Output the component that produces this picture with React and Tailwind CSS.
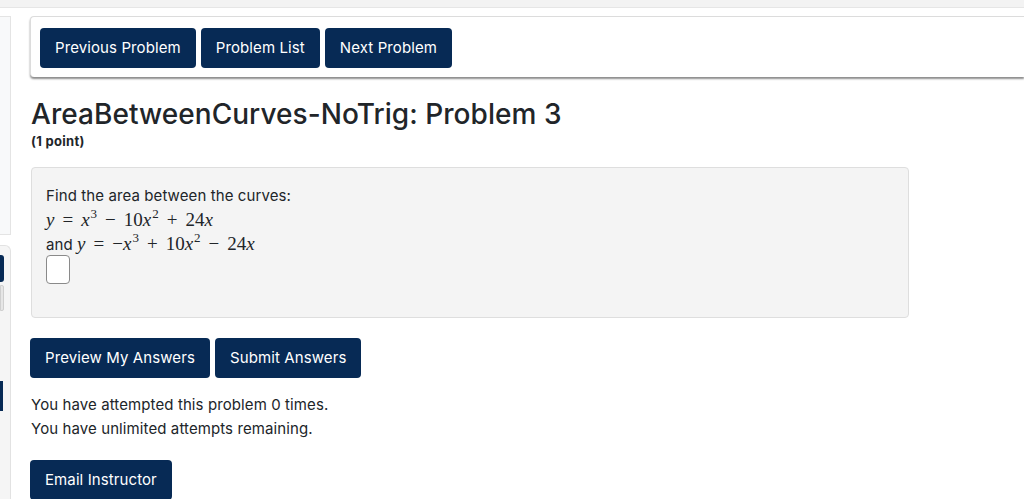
import React from 'react';

const font = { fontFamily: 'Inter, "Liberation Sans", Arial, sans-serif' };
const serif = { fontFamily: '"Liberation Serif", "DejaVu Serif", serif' };

function NavyButton({ children, className = '' }) {
  return (
    <button className={`h-[40px] px-[15px] rounded-[4px] bg-[#072a55] text-white text-[15px] tracking-[0.1px] ${className}`}>
      {children}
    </button>
  );
}

function V({ children }) {
  return <span className="italic">{children}</span>;
}

function Sup({ children }) {
  return <span className="inline-block text-[13px] leading-none relative -top-[8px] ml-[1px]">{children}</span>;
}

function Op({ children }) {
  return <span className="inline-block mx-[8px]">{children}</span>;
}

export default function App() {
  return (
    <div className="w-[1024px] h-[499px] overflow-hidden bg-white text-[#212529]" style={font}>
      <div className="h-[8px] bg-[#f3f3f3] border-b border-[#e6e6e6]" />
      <div className="flex">
        <aside className="w-[11px] shrink-0 flex flex-col">
          <div className="mt-[8px] h-[219px] bg-[#f8f9fa] border-r border-b border-t border-[#e4e4e4]" />
          <div className="mt-[10px] h-[300px] bg-[#f5f5f5] border-r border-t border-[#e2e2e2] rounded-tr-[6px] pt-[9px] flex flex-col">
            <div className="h-[27px] w-[4px] bg-[#072a55] rounded-r-[3px]" />
            <div className="mt-[3px] h-[26px] w-[4px] bg-[#e6e6e6] border border-[#cfcfcf] rounded-r-[2px]" />
            <div className="mt-[70px] h-[30px] w-[3px] bg-[#072a55]" />
          </div>
        </aside>
        <main className="flex-1 pl-[19px] pt-[8px]">
          <div className="h-[61px] bg-white border-t border-l border-[#dcdcdc] rounded-l-[4px] shadow-[0_2px_2px_rgba(0,0,0,0.45)] flex items-center gap-[5px] pl-[9px] pt-[2px]">
            <NavyButton>Previous Problem</NavyButton>
            <NavyButton>Problem List</NavyButton>
            <NavyButton>Next Problem</NavyButton>
          </div>
          <div className="pl-px">
            <h1 className="mt-[20px] text-[28px] font-medium leading-[34px] tracking-[0.05px]">
              AreaBetweenCurves-NoTrig: Problem 3
            </h1>
            <div className="mt-[1px] text-[13px] font-bold leading-[18px] tracking-[0.3px]">(1 point)</div>
            <div className="mt-[17px] w-[878px] h-[151px] bg-[#f4f4f4] border border-[#dedede] rounded-[4px] px-[14px] pt-[16px] text-[15px] leading-[24px] tracking-[0.1px]">
              <div>Find the area between the curves:</div>
              <div style={serif} className="text-[19px] leading-[24px] tracking-normal">
                <V>y</V><Op>=</Op><V>x</V><Sup>3</Sup><Op>−</Op>10<V>x</V><Sup>2</Sup><Op>+</Op>24<V>x</V>
              </div>
              <div className="leading-[24px]">
                and{' '}
                <span style={serif} className="text-[19px] tracking-normal">
                  <V>y</V><Op>=</Op>−<V>x</V><Sup>3</Sup><Op>+</Op>10<V>x</V><Sup>2</Sup><Op>−</Op>24<V>x</V>
                </span>
              </div>
              <div className="-mt-[2px] w-[24px] h-[29px] bg-white border border-[#8a8a8a] rounded-[4px]" />
            </div>
            <div className="mt-[20px] flex gap-[5px] -ml-px">
              <NavyButton>Preview My Answers</NavyButton>
              <NavyButton>Submit Answers</NavyButton>
            </div>
            <div className="mt-[15px] text-[15px] leading-[24px] tracking-[0.1px]">
              <div>You have attempted this problem 0 times.</div>
              <div>You have unlimited attempts remaining.</div>
            </div>
            <div className="mt-[19px] -ml-px">
              <NavyButton>Email Instructor</NavyButton>
            </div>
          </div>
        </main>
      </div>
    </div>
  );
}
